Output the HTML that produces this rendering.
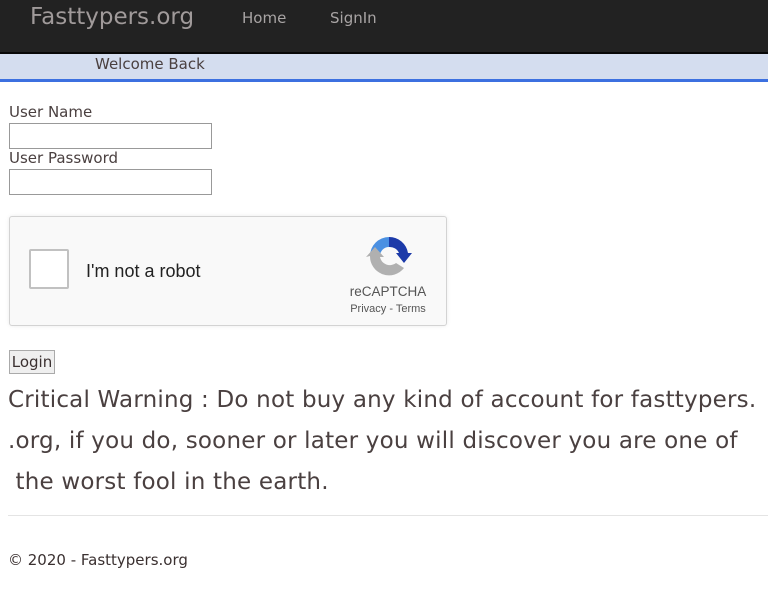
<!DOCTYPE html>
<html><head><style>
*{margin:0;padding:0;box-sizing:border-box}
body{width:768px;height:590px;background:#fff;font-family:"DejaVu Sans","Liberation Sans",sans-serif;color:#4a4340;position:relative;overflow:hidden}
.nav{position:absolute;left:0;top:0;width:768px;height:54px;background:#222;border-bottom:2px solid #080808}
.brand{position:absolute;left:30px;top:4px;font-size:23px;color:#a09a9a}
.nl{position:absolute;top:9px;font-size:15px;color:#a8a4a4}
.wb{position:absolute;left:0;top:54px;width:768px;height:28px;background:#d4ddef;border-bottom:3px solid #3c70e0}
.wb span{position:absolute;left:95px;top:1px;font-size:15px;color:#4a4040}
.lbl{position:absolute;left:9px;font-size:15px;color:#4a4040}
.inp{position:absolute;left:9px;width:203px;height:26px;border:1px solid #999;background:#fff}
.cap{position:absolute;left:9px;top:216px;width:438px;height:110px;background:#f9f9f9;border:1px solid #d3d3d3;border-radius:3px;box-shadow:0 0 4px rgba(0,0,0,.08)}
.cb{position:absolute;left:19px;top:32px;width:40px;height:40px;border:2px solid #c1c1c1;border-radius:2px;background:#fff}
.rob{position:absolute;left:76px;top:44px;font-family:"Liberation Sans",sans-serif;font-size:18px;color:#222}
.rc{position:absolute;right:8px;top:67px;font-family:"Liberation Sans",sans-serif;font-size:13.5px;color:#555;text-align:center;width:100px}
.pt{position:absolute;right:8px;top:86px;font-family:"Liberation Sans",sans-serif;font-size:11px;color:#555;text-align:center;width:100px}
.btn{position:absolute;left:9px;top:350px;width:46px;height:24px;border:1px solid #aaa;background:#efefef;font-size:15px;color:#3a3030;text-align:center;line-height:22px}
.warn{position:absolute;left:8px;top:380px;width:760px;font-size:23px;line-height:41px;color:#4a4040;letter-spacing:0.2px}
.hr{position:absolute;left:8px;top:515px;width:760px;height:1px;background:#e4e4e4}
.ft{position:absolute;left:8px;top:551px;font-size:15px;color:#3a3030}
</style></head><body>
<div class="nav"><div class="brand">Fasttypers.org</div><div class="nl" style="left:242px">Home</div><div class="nl" style="left:330px">SignIn</div></div>
<div class="wb"><span>Welcome Back</span></div>
<div class="lbl" style="top:103px">User Name</div>
<div class="inp" style="top:123px"></div>
<div class="lbl" style="top:149px">User Password</div>
<div class="inp" style="top:169px"></div>
<div class="cap"><div class="cb"></div><div class="rob">I'm not a robot</div>
<svg style="position:absolute;left:356px;top:16px" width="46" height="46" viewBox="0 0 46 46">
<path d="M23 4 A19 19 0 0 0 4 23 L14 23 A9 9 0 0 1 23 14 Z" fill="#4a90e2"/>
<path d="M23 4 A19 19 0 0 1 42 20 L46 20 L38 30 L30 20 L33 20 A10 10 0 0 0 23 14 Z" fill="#1c3aa9"/>
<path d="M4 23 A19 19 0 0 0 38 35 L30 30 A10 10 0 0 1 14 24 L18 24 L9 14 L0 24 Z" fill="#b0b0b0"/>
</svg>
<div class="rc">reCAPTCHA</div><div class="pt">Privacy - Terms</div></div>
<div class="btn">Login</div>
<div class="warn">Critical Warning : Do not buy any kind of account for fasttypers.<br>.org, if you do, sooner or later you will discover you are one of<br>&nbsp;the worst fool in the earth.</div>
<div class="hr"></div>
<div class="ft">© 2020 - Fasttypers.org</div>
</body></html>
